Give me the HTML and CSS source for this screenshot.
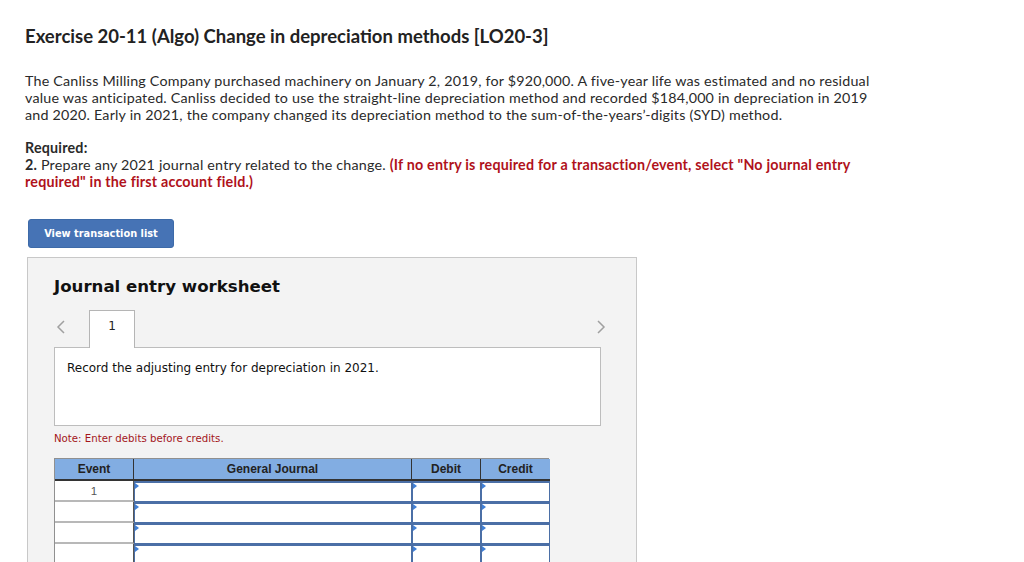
FILE: index.html
```html
<!DOCTYPE html>
<html>
<head>
<meta charset="utf-8">
<link rel="stylesheet" href="styles.css">
</head>
<body>
<div class="page">
  <h1 class="title">Exercise 20-11 (Algo) Change in depreciation methods [LO20-3]</h1>
  <p class="intro">The Canliss Milling Company purchased machinery on January 2, 2019, for $920,000. A five-year life was estimated and no residual value was anticipated. Canliss decided to use the straight-line depreciation method and recorded $184,000 in depreciation in 2019 and 2020. Early in 2021, the company changed its depreciation method to the sum-of-the-years’-digits (SYD) method.</p>
  <div class="required">
    <div class="req-label">Required:</div>
    <div class="req-text"><b>2.</b> Prepare any 2021 journal entry related to the change. <span class="red">(If no entry is required for a transaction/event, select "No journal entry required" in the first account field.)</span></div>
  </div>
  <button class="btn">View transaction list</button>
  <div class="panel">
    <h2 class="ws-title">Journal entry worksheet</h2>
    <div class="tabs">
      <span class="arrow">
        <svg width="10" height="14" viewBox="0 0 10 14"><path d="M8 1 L2 7 L8 13" fill="none" stroke="#a0a0a0" stroke-width="1.5"/></svg>
      </span>
      <div class="tab">1</div>
      <span class="spacer"></span>
      <span class="arrow right">
        <svg width="10" height="14" viewBox="0 0 10 14"><path d="M2 1 L8 7 L2 13" fill="none" stroke="#a0a0a0" stroke-width="1.5"/></svg>
      </span>
    </div>
    <div class="desc">Record the adjusting entry for depreciation in 2021.</div>
    <div class="note">Note: Enter debits before credits.</div>
    <div class="grid">
      <div class="hd">Event</div>
      <div class="hd">General Journal</div>
      <div class="hd">Debit</div>
      <div class="hd">Credit</div>

      <div class="ev">1</div>
      <div class="in"><i class="tri"></i></div>
      <div class="in"><i class="tri"></i></div>
      <div class="in"><i class="tri"></i></div>

      <div class="ev"></div>
      <div class="in"><i class="tri"></i></div>
      <div class="in"><i class="tri"></i></div>
      <div class="in"><i class="tri"></i></div>

      <div class="ev"></div>
      <div class="in"><i class="tri"></i></div>
      <div class="in"><i class="tri"></i></div>
      <div class="in"><i class="tri"></i></div>

      <div class="ev"></div>
      <div class="in"><i class="tri"></i></div>
      <div class="in"><i class="tri"></i></div>
      <div class="in"><i class="tri"></i></div>
    </div>
  </div>
</div>
</body>
</html>
```

FILE: styles.css
```css
html, body {
  margin: 0;
  padding: 0;
  background: #ffffff;
}
.page {
  padding: 25px 0 0 25px;
  font-family: "Lato", "Open Sans", sans-serif;
  color: #333333;
}
.title {
  margin: 0;
  font-size: 18.5px;
  font-weight: 700;
  color: #222222;
  line-height: 23px;
}
.intro {
  margin: 24px 0 0 0;
  width: 850px;
  font-size: 14.3px;
  letter-spacing: 0.2px;
  line-height: 17px;
  color: #2a2a2a;
}
.required {
  margin-top: 16px;
  font-size: 14.3px;
  letter-spacing: 0.2px;
  line-height: 17px;
  color: #2a2a2a;
  width: 850px;
}
.req-label {
  font-weight: 700;
}
.req-text b {
  font-weight: 700;
}
.red {
  color: #b0121b;
  font-weight: 700;
}
.btn {
  display: block;
  margin: 29px 0 0 3px;
  width: 146px;
  height: 29px;
  border: 1px solid #3d6aa8;
  border-radius: 3px;
  background: #4673b5;
  color: #ffffff;
  font-family: "DejaVu Sans", Verdana, sans-serif;
  font-size: 9.8px;
  font-weight: 700;
  padding: 0;
}
.panel {
  margin: 9px 0 0 2px;
  width: 610px;
  height: 320px;
  background: #f3f3f3;
  border: 1px solid #c8c8c8;
  padding: 0 0 0 26px;
  box-sizing: border-box;
  font-family: "DejaVu Sans", Verdana, sans-serif;
}
.ws-title {
  margin: 18px 0 0 0;
  font-size: 16.6px;
  font-weight: 700;
  color: #111111;
  line-height: 21px;
}
.tabs {
  display: flex;
  align-items: flex-end;
  margin-top: 12px;
  width: 552px;
  height: 38px;
}
.arrow {
  width: 10px;
  height: 14px;
  margin: 0 23px 13px 2px;
  display: flex;
}
.arrow.right {
  margin: 0 0 13px 0;
}
.spacer {
  flex: 1;
}
.tab {
  width: 46px;
  height: 38px;
  box-sizing: border-box;
  background: #ffffff;
  border: 1px solid #b5b5b5;
  border-bottom: none;
  text-align: center;
  font-size: 12px;
  line-height: 30px;
  color: #222222;
  position: relative;
  top: 1px;
}
.desc {
  width: 547px;
  height: 79px;
  box-sizing: border-box;
  background: #ffffff;
  border: 1px solid #bdbdbd;
  padding: 13px 0 0 12px;
  font-size: 12px;
  color: #111111;
}
.note {
  margin-top: 6px;
  font-size: 10.2px;
  color: #a3161b;
  line-height: 14px;
}
.grid {
  margin-top: 12px;
  display: grid;
  grid-template-columns: 79px 278px 69px 69px;
  grid-template-rows: 22px;
  grid-auto-rows: 21px;
  width: 495px;
  border-left: 1px solid #909090;
  border-right: 1px solid #909090;
  border-top: 1px solid #909090;
  box-sizing: border-box;
}
.hd {
  background: #82ade2;
  border-right: 1px solid #333333;
  border-bottom: 2px solid #333333;
  box-sizing: border-box;
  font-family: "Liberation Sans", Arial, sans-serif;
  font-weight: 700;
  font-size: 12px;
  color: #222222;
  text-align: center;
  line-height: 20px;
}
.hd:nth-child(4) {
  border-right: none;
}
.ev {
  background: #ffffff;
  border-bottom: 2px solid #b8b8b8;
  border-right: 1px solid #555555;
  box-sizing: border-box;
  font-family: "Liberation Sans", Arial, sans-serif;
  font-size: 11.5px;
  color: #555555;
  text-align: center;
  line-height: 20px;
}
.in {
  position: relative;
  background: #ffffff;
  border: 1.5px solid #4b6fa6;
  border-top: 2px solid #4b6fa6;
  border-bottom: 1px solid #4b6fa6;
  box-sizing: border-box;
}
.tri {
  position: absolute;
  left: 0;
  top: 0;
  width: 0;
  height: 0;
  border-top: 3px solid transparent;
  border-bottom: 3px solid transparent;
  border-left: 4px solid #3f7fd6;
}
```
